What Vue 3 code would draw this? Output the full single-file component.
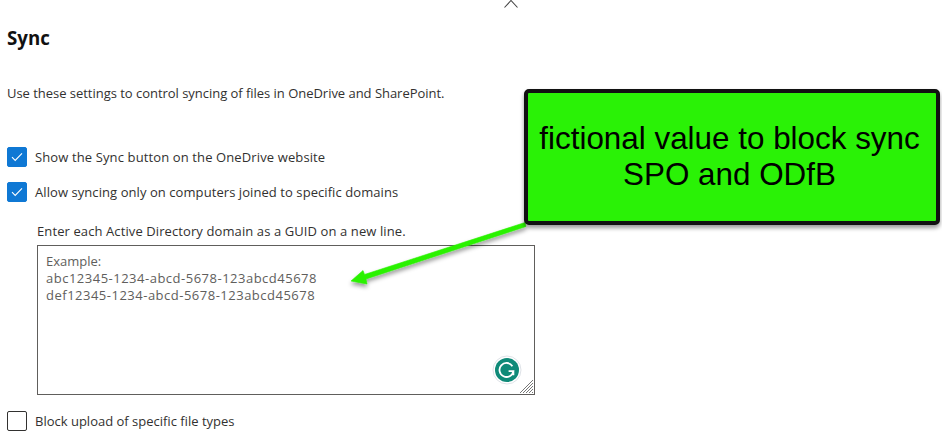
<script setup>
const rows = [
  { text: 'Example:', guid: false },
  { text: 'abc12345-1234-abcd-5678-123abcd45678', guid: true },
  { text: 'def12345-1234-abcd-5678-123abcd45678', guid: true }
]
</script>

<template>
  <div class="page">
    <svg class="caret" width="16" height="8" viewBox="0 0 16 8"><path d="M1.5 7.5 L8 0.5 L14.5 7.5" fill="none" stroke="#444" stroke-width="1.1" /></svg>
    <h2 class="title">Sync</h2>
    <p class="intro">Use these settings to control syncing of files in OneDrive and SharePoint.</p>

    <div class="check first">
      <span class="box on"><svg width="12" height="10" viewBox="0 0 12 10"><path d="M1 5.2 L4.2 8.4 L11 1.4" fill="none" stroke="#fff" stroke-width="1.1" /></svg></span>
      <span>Show the Sync button on the OneDrive website</span>
    </div>
    <div class="check second">
      <span class="box on"><svg width="12" height="10" viewBox="0 0 12 10"><path d="M1 5.2 L4.2 8.4 L11 1.4" fill="none" stroke="#fff" stroke-width="1.1" /></svg></span>
      <span>Allow syncing only on computers joined to specific domains</span>
    </div>

    <div class="field">
      <label class="field-label">Enter each Active Directory domain as a GUID on a new line.</label>
      <div class="area">
        <div v-for="r in rows" :key="r.text" class="line" :class="{ guid: r.guid }">{{ r.text }}</div>
        <span class="grammarly">
          <svg width="30" height="30" viewBox="0 0 30 30">
            <circle cx="15" cy="15" r="14" fill="#fff" stroke="#dfe3e8" stroke-width="1" />
            <circle cx="15" cy="15" r="12" fill="#0f8a78" />
            <path d="M20.4 11.2 A7 7 0 1 0 21.4 16.2 H16.6 M21.4 16.2 V20.2" fill="none" stroke="#fff" stroke-width="1.8" />
          </svg>
        </span>
        <svg class="grip" width="15" height="15" viewBox="0 0 15 15">
          <path d="M1 14 L14 1 M4 14 L14 4 M7 14 L14 7 M10 14 L14 10 M13 14 L14 13" stroke="#777" stroke-width="1" fill="none" />
        </svg>
      </div>
    </div>

    <div class="check third">
      <span class="box"></span>
      <span>Block upload of specific file types</span>
    </div>

    <svg class="arrow" width="942" height="448" viewBox="0 0 942 448">
      <defs>
        <filter id="sh" x="-10%" y="-30%" width="120%" height="170%">
          <feDropShadow dx="0" dy="3" stdDeviation="2" flood-color="#000" flood-opacity="0.4" />
        </filter>
      </defs>
      <path d="M525 222.5 L526 226.5 L366 279 L367 284 L351 281 L363 270.5 L364.5 274.5 Z" fill="#2af206" stroke="#2af206" stroke-width="0.6" stroke-linejoin="round" filter="url(#sh)" />
    </svg>

    <div class="callout">fictional value to block sync<br />SPO and ODfB</div>
  </div>
</template>

<style scoped>
.page {
  position: relative;
  width: 942px;
  height: 448px;
  overflow: hidden;
  padding-left: 7px;
  box-sizing: border-box;
  background: #fff;
  font-family: "Open Sans", "Noto Sans", sans-serif;
  font-size: 13px;
  color: #323130;
}
.caret {
  position: absolute;
  left: 503px;
  top: 0;
}
.title {
  margin: 0;
  padding-top: 26px;
  font-size: 18.7px;
  line-height: 23px;
  font-weight: 700;
  color: #111;
}
.intro {
  margin: 35px 0 0;
  line-height: 18px;
  letter-spacing: -0.03px;
}
.check {
  display: flex;
  align-items: center;
  gap: 8px;
  line-height: 20px;
}
.first { margin-top: 45px; letter-spacing: 0.12px; }
.second { margin-top: 15px; letter-spacing: 0.07px; }
.third { margin-top: 16px; }
.box {
  display: flex;
  align-items: center;
  justify-content: center;
  width: 20px;
  height: 20px;
  box-sizing: border-box;
  border: 1px solid #323130;
  border-radius: 2px;
}
.box.on {
  background: #0f78d4;
  border-color: #0f78d4;
}
.field {
  margin: 20px 0 0 30px;
}
.field-label {
  display: block;
  line-height: 18px;
  letter-spacing: 0.1px;
}
.area {
  position: relative;
  margin-top: 5px;
  width: 498px;
  height: 150px;
  box-sizing: border-box;
  border: 1px solid #605e5c;
  padding: 7px 8px;
  color: #605e5c;
}
.line {
  line-height: 17px;
}
.guid {
  letter-spacing: 0.5px;
}
.grammarly {
  position: absolute;
  right: 12px;
  bottom: 9px;
  display: flex;
}
.grip {
  position: absolute;
  right: 0;
  bottom: 0;
}
.arrow {
  position: absolute;
  left: 0;
  top: 0;
}
.callout {
  position: absolute;
  left: 524px;
  top: 89px;
  width: 416px;
  height: 136px;
  box-sizing: border-box;
  border: 4px solid #111;
  border-radius: 5px;
  background: #2af206;
  box-shadow: 0 3px 4px rgba(0, 0, 0, 0.4);
  padding: 28px 5px 0 0;
  text-align: center;
  font-family: "Liberation Sans", Arial, sans-serif;
  font-size: 31.4px;
  line-height: 36px;
  color: #000;
}
</style>
